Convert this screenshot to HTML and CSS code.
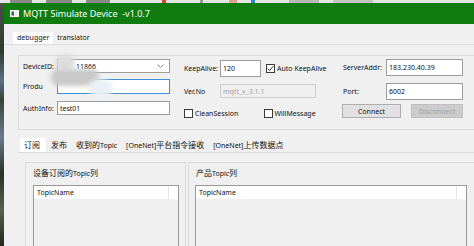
FILE: index.html
```html
<!DOCTYPE html>
<html lang="zh">
<head>
<meta charset="utf-8">
<title>MQTT Simulate Device</title>
<link rel="stylesheet" href="styles.css">
</head>
<body>
  <div class="top-strip">
    <span class="mark m1"></span><span class="mark m2"></span><span class="mark m3"></span>
    <span class="mark red"></span><span class="mark m4"></span><span class="mark pink"></span>
    <span class="mark blue"></span><span class="mark m5"></span><span class="mark m6"></span>
  </div>
  <div class="screen">
    <div class="desk"></div>
    <div class="window">
      <div class="titlebar">
        <svg class="app-icon" width="9" height="7" viewBox="0 0 9 7">
          <rect x="0.5" y="0.5" width="8" height="6" fill="#e8eef2" stroke="#ffffff"/>
          <rect x="1.5" y="1.5" width="2.5" height="4" fill="#4a5a66"/>
        </svg>
        <span>MQTT Simulate Device&nbsp;&nbsp;-v1.0.7</span>
      </div>

      <div class="tabs tabs-main">
        <span class="tab active">debugger</span>
        <span class="tab">translator</span>
      </div>

      <div class="pane">
        <div class="group settings">
          <div class="col col-device">
            <div class="field row-a">
              <span class="label w34">DeviceID:</span>
              <div class="combo">
                <span class="combo-text">11866</span>
                <svg width="7" height="4" viewBox="0 0 7 4"><path d="M0.5 0.5 L3.5 3.5 L6.5 0.5" fill="none" stroke="#777" stroke-width="0.8"/></svg>
              </div>
            </div>
            <div class="field row-b">
              <span class="label w34">Produ</span>
              <input class="box focused w113" type="text" value="">
            </div>
            <div class="field row-c">
              <span class="label w34">AuthInfo:</span>
              <input class="box w113" type="text" value="test01">
            </div>
          </div>

          <div class="col col-keep">
            <div class="field row-a">
              <span class="label w36">KeepAlive:</span>
              <input class="box tall w41" type="text" value="120">
              <span class="check on gap5">
                <svg width="7" height="7" viewBox="0 0 7 7"><path d="M0.8 3.6 L2.7 5.6 L6.3 1" fill="none" stroke="#222" stroke-width="0.9"/></svg>
              </span>
              <span class="check-text">Auto KeepAlive</span>
            </div>
            <div class="field row-b2">
              <span class="label w36">Ver.No</span>
              <input class="box disabled w96" type="text" value="mqtt_v_3.1.1" disabled>
            </div>
            <div class="field row-c2">
              <span class="check-item"><span class="check"></span><span class="check-text">CleanSession</span></span>
              <span class="check-item"><span class="check"></span><span class="check-text">WillMessage</span></span>
            </div>
          </div>

          <div class="col col-server">
            <div class="field row-a">
              <span class="label w43">ServerAddr:</span>
              <input class="box tall w77" type="text" value="183.230.40.39">
            </div>
            <div class="field row-b3">
              <span class="label w43">Port:</span>
              <input class="box tall w77" type="text" value="6002">
            </div>
            <div class="field row-c3">
              <button class="btn connect">Connect</button>
              <button class="btn disconnect" disabled>Disconnect</button>
            </div>
          </div>
        </div>

        <div class="tabs tabs-sub">
          <span class="tab active"><span class="cjk">订阅</span></span>
          <span class="tab"><span class="cjk">发布</span></span>
          <span class="tab"><span class="cjk">收到的</span>Topic</span>
          <span class="tab">[OneNet]<span class="cjk">平台指令接收</span></span>
          <span class="tab">[OneNet]<span class="cjk">上传数据点</span></span>
        </div>

        <div class="sub-pane">
          <div class="group topics topics-device">
            <div class="group-title"><span class="cjk">设备订阅的</span>Topic<span class="cjk">列</span></div>
            <div class="listview lv-device">
              <div class="lv-header"><span class="lv-col">TopicName</span><span class="lv-rest"></span></div>
            </div>
          </div>
          <div class="group topics topics-product">
            <div class="group-title"><span class="cjk">产品</span>Topic<span class="cjk">列</span></div>
            <div class="listview lv-product">
              <div class="lv-header"><span class="lv-col">TopicName</span><span class="lv-rest"></span></div>
            </div>
          </div>
        </div>
      </div>
    </div>
  </div>

  <!-- privacy blur over the device id -->
  <div class="blur-mask">
    <span class="blob b1"></span>
    <span class="blob b2"></span>
    <span class="blob b3"></span>
  </div>
</body>
</html>
```

FILE: styles.css
```css
html, body {
  margin: 0;
  padding: 0;
}

body {
  width: 474px;
  height: 246px;
  overflow: hidden;
  background: #f0f0f0;
  font-family: "Noto Sans", "Noto Sans CJK SC", sans-serif;
  font-size: 7px;
  color: #111111;
}

.cjk {
  font-family: "Noto Sans CJK SC", sans-serif;
  font-size: 8px;
}

/* desktop bits around the window */
.top-strip {
  height: 3px;
  background: #e4e4e4;
  display: flex;
  gap: 14px;
  padding-left: 10px;
}
.mark { width: 16px; background: #8a8a8a; }
.m1 { width: 22px; }
.m2 { width: 26px; }
.m3 { width: 24px; }
.red { width: 4px; background: #d8442c; margin-left: 38px; }
.m4 { width: 3px; background: #999; margin-left: 20px; }
.pink { width: 8px; background: #e3a08c; margin-left: 12px; }
.blue { width: 4px; background: #2a8ad6; }
.m5 { width: 30px; background: #b9b9b9; margin-left: 20px; }
.m6 { width: 40px; background: #c4c4c4; }

.screen {
  display: flex;
  height: 243px;
}

.desk {
  width: 4px;
  background: linear-gradient(#4a5048 0%, #2e3a30 20%, #5e6e86 32%, #394236 40%, #6c7a8c 55%, #2a3028 70%, #59604f 85%, #22261f 100%);
}

.window {
  flex: 1;
  min-width: 0;
  display: flex;
  flex-direction: column;
}

.titlebar {
  height: 21px;
  background: #107c10;
  color: #ffffff;
  display: flex;
  align-items: center;
  gap: 4px;
  padding-left: 6px;
  font-size: 9px;
}

/* tabs */
.tabs {
  display: flex;
  align-items: stretch;
}
.tab {
  padding: 0 3px;
  white-space: nowrap;
}
.tab.active { background: #ffffff; }

.tabs-main {
  height: 12px;
  line-height: 12px;
  margin: 8px 0 0 9px;
}
.tabs-main .tab { padding: 0 4px; }

.pane {
  flex: 1;
  border-top: 1px solid #dcdcdc;
  padding: 10px 0 0 14px;
}

.group {
  border: 1px solid #dcdcdc;
  box-sizing: border-box;
}

/* connection settings */
.settings {
  height: 75px;
  margin-right: -4px;
  display: flex;
  padding-left: 4px;
}

.col {
  display: flex;
  flex-direction: column;
}
.col-device { width: 147px; padding-top: 3px; }
.col-keep { width: 159px; margin-left: 14px; padding-top: 4px; }
.col-server { padding-top: 3px; }

.field {
  display: flex;
  align-items: center;
}
.row-a { height: 17px; }
.col-device .row-a { height: 14px; }
.row-b { height: 15px; margin-top: 6px; }
.row-c { height: 14px; margin-top: 7px; }
.row-b2 { height: 14px; margin-top: 7px; }
.row-c2 { height: 10px; margin-top: 10px; }
.row-b3 { height: 17px; margin-top: 7px; }
.row-c3 { height: 14px; margin-top: 4px; }

.label { white-space: nowrap; }
.w34 { width: 34px; }
.w36 { width: 36px; }
.w43 { width: 43px; }

.box {
  box-sizing: border-box;
  height: 14px;
  margin: 0;
  padding: 0 2px;
  border: 1px solid #9c9c9c;
  background: #ffffff;
  font: inherit;
  color: #111111;
  outline: none;
}
.box.tall { height: 17px; }
.box.focused { height: 15px; border-color: #3f8fd8; }
.box.disabled {
  background: #f0f0f0;
  border-color: #cfcfcf;
  color: #a2a2a2;
}
.w113 { width: 113px; }
.w41 { width: 41px; }
.w96 { width: 96px; }
.w77 { width: 77px; }

.combo {
  box-sizing: border-box;
  width: 113px;
  height: 14px;
  border: 1px solid #9c9c9c;
  background: #ffffff;
  display: flex;
  align-items: center;
  justify-content: space-between;
  padding: 0 5px 0 18px;
}

.check {
  box-sizing: border-box;
  width: 9px;
  height: 9px;
  border: 1px solid #3a3a3a;
  background: #ffffff;
  display: flex;
  align-items: center;
  justify-content: center;
  flex-shrink: 0;
}
.gap5 { margin-left: 5px; }
.check-text { margin-left: 2px; white-space: nowrap; }
.check-item {
  display: flex;
  align-items: center;
  width: 82px;
}

.btn {
  box-sizing: border-box;
  height: 14px;
  margin: 0;
  padding: 0;
  font: inherit;
  border: 1px solid #adadad;
  background: #e1e1e1;
  color: #111111;
}
.connect { width: 59px; margin-left: -1px; }
.disconnect {
  width: 52px;
  margin-left: 10px;
  background: #cccccc;
  border-color: #bfbfbf;
  color: #a0a0a0;
}

/* lower tab control */
.tabs-sub {
  height: 14px;
  line-height: 14px;
  margin: 8px 0 0 2px;
}
.tabs-sub .tab { padding: 0 4px 0 5px; }
.tabs-sub .tab.active { padding: 0 6px 0 4px; }

.sub-pane {
  border-top: 1px solid #dcdcdc;
  margin-right: -4px;
  display: flex;
  padding: 9px 0 0 7px;
  height: 94px;
  box-sizing: border-box;
}

.topics {
  border-bottom: none;
}
.topics-device { width: 161px; }
.topics-product { flex: 1; margin-left: 2px; }

.group-title {
  padding: 5px 0 0 7px;
  line-height: 10px;
  height: 10px;
}

.listview {
  margin-top: 7px;
  height: 62px;
  box-sizing: border-box;
  border: 1px solid #9a9a9a;
  border-bottom: none;
  background: #f0f0f0;
}
.lv-device { margin-left: 7px; width: 146px; }
.lv-product { margin-left: 6px; width: 272px; }

.lv-header {
  display: flex;
  height: 13px;
  line-height: 13px;
  background: #ffffff;
}
.lv-col {
  padding-left: 3px;
  border-right: 1px solid #e4e4e4;
}
.lv-device .lv-col { width: 131px; }
.lv-product .lv-col { width: 257px; }
.lv-rest { flex: 1; }

/* blurred area over the device id */
.blur-mask {
  position: absolute;
  left: 0;
  top: 0;
}
.blob {
  position: absolute;
  border-radius: 50%;
  filter: blur(2px);
}
.b1 { left: 55px; top: 54px; width: 20px; height: 17px; background: #dcdcdc; }
.b2 { left: 51px; top: 69px; width: 48px; height: 17px; background: #c9c9c9; border-radius: 8px; }
.b3 { left: 88px; top: 79px; width: 25px; height: 18px; background: #eaf0f6; }
```
